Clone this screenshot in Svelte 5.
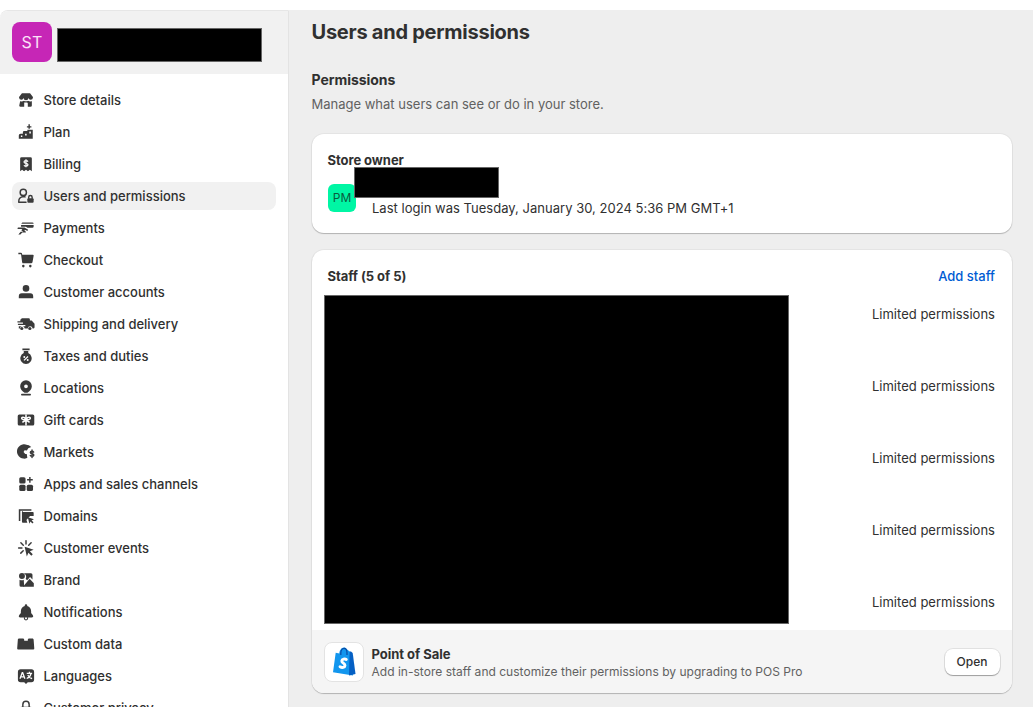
<script>
  const nav = [
    { label: "Store details", icon: "store" },
    { label: "Plan", icon: "plan" },
    { label: "Billing", icon: "billing" },
    { label: "Users and permissions", icon: "users", active: true },
    { label: "Payments", icon: "payments" },
    { label: "Checkout", icon: "cart" },
    { label: "Customer accounts", icon: "person" },
    { label: "Shipping and delivery", icon: "truck" },
    { label: "Taxes and duties", icon: "taxes" },
    { label: "Locations", icon: "pin" },
    { label: "Gift cards", icon: "gift" },
    { label: "Markets", icon: "globe" },
    { label: "Apps and sales channels", icon: "apps" },
    { label: "Domains", icon: "domains" },
    { label: "Customer events", icon: "events" },
    { label: "Brand", icon: "brand" },
    { label: "Notifications", icon: "bell" },
    { label: "Custom data", icon: "data" },
    { label: "Languages", icon: "lang" },
    { label: "Customer privacy", icon: "lock" },
  ];

  const staff = [1, 2, 3, 4, 5];
</script>

{#snippet icon(name)}
  <svg class="ico" viewBox="0 0 20 20" aria-hidden="true">
    {#if name === "store"}
      <path d="M5.500 2.500h9l3.200 4.300v.7a2.600 2.600 0 0 1-5.100.3 2.600 2.600 0 0 1-5.200 0 2.600 2.600 0 0 1-5.100-.3v-.7z" />
      <path fill-rule="evenodd" d="M3.500 11.400c1.500.4 3.200.1 4.300-.7 1.300.9 3.100.9 4.400 0 1.100.8 2.800 1.100 4.300.7v4.600a1.500 1.500 0 0 1-1.500 1.500h-11a1.500 1.500 0 0 1-1.500-1.500zM8 12.800v4.700h4v-3.700a1 1 0 0 0-1-1z" />
    {:else if name === "plan"}
      <path d="M12.700 1.500h1.600v2h1.700v1.400h-1.700v1.600h-1.600v-1.600h-1.700v-1.400h1.700z" />
      <path fill-rule="evenodd" d="M11.500 7.500h6v10h-15.500v-3.500a2 2 0 0 1 2-2h2.500v-1.500a1.500 1.500 0 0 1 1.500-1.500h3.500zM13.700 9.500v2.300h1.700v-2.300zM9 12v2h1.700v-2zM4.300 14v1.600h1.600v-1.600z" />
    {:else if name === "billing"}
      <path d="M5 2.500h10a1.500 1.500 0 0 1 1.500 1.500v14l-2.200-1.600-2.100 1.600-2.200-1.600-2.200 1.600-2.100-1.600-2.200 1.600v-14a1.500 1.500 0 0 1 1.500-1.500z" />
      <path class="cut" d="M12.200 7.300c-.4-.7-1.200-1-2.200-1-1.200 0-2.200.5-2.200 1.500 0 2.100 4.400 1 4.400 3.100 0 1-1 1.500-2.200 1.500-1 0-1.900-.4-2.200-1.100M10 4.700v9" />
    {:else if name === "users"}
      <path class="line" d="M10.500 6a3.500 3.500 0 1 1-7 0 3.500 3.500 0 0 1 7 0zM2 16.500v-1a4.500 4.500 0 0 1 4.500-4.500h2.500" />
      <path class="line" d="M2 17h8" />
      <path class="line" d="M13 12.500v-1.200a1.900 1.900 0 0 1 3.800 0v1.200" />
      <rect x="11.500" y="12.500" width="7" height="5" rx="1.200" />
    {:else if name === "payments"}
      <path d="M6 3.800h11a1.500 1.500 0 0 1 1.500 1.500h-13.500a1.500 1.500 0 0 1 1-1.500zM4.500 6.800h14v1.500a1.500 1.500 0 0 1-1.500 1.500h-5.500l-1.500-1.300h-5.500z" />
      <path d="M1 9.500h7.300l3.700 2.200c.8.600 0 1.700-.9 1.300l-2.300-1.100-.6.700 1.600 1.500c.4.500-.1 1.200-.7 1h-3.300l-2 2h-2.300l2.600-2.800h2.700l-2-1.700 1.200-1.500h-5.500z" />
    {:else if name === "cart"}
      <path d="M1.500 2h2.700a1.500 1.500 0 0 1 1.500 1.300l.1 .9h11.700a1 1 0 0 1 1 1.200l-1.300 7.100a1.500 1.500 0 0 1-1.500 1.200h-8.500a1.500 1.500 0 0 1-1.500-1.300l-1.200-8.900h-3z" />
      <circle cx="7" cy="16.800" r="1.400" /><circle cx="14.800" cy="16.800" r="1.400" />
    {:else if name === "person"}
      <circle cx="10" cy="6" r="3.700" />
      <path d="M5.800 11.400h8.400a3.500 3.500 0 0 1 3.800 3.500v2.100h-16v-2.100a3.500 3.500 0 0 1 3.800-3.500z" />
    {:else if name === "truck"}
      <path fill-rule="evenodd" d="M5 3.500h8a1.300 1.300 0 0 1 1.300 1.300v1.200h2l3.200 3.700v4a1.200 1.200 0 0 1-1.200 1.200h-.9a2.800 2.800 0 0 0-5.500 0h-3.300a2.800 2.800 0 0 0-5.500 0h-1.100v-2.400h7.300v-1.300h-8.300v-1.500h5.600v-1.300h-6.100v-1.500h3.200v-1.200a1.300 1.300 0 0 1 1.300-1.300z" />
      <circle cx="5.300" cy="15" r="1.800" /><circle cx="14.300" cy="15" r="1.800" />
    {:else if name === "taxes"}
      <path d="M6 1.800h8v1.700h-8zM7.500 4.500h5v2.300a6.300 6.300 0 1 1-5 0z" />
      <path class="cut" d="M7.800 14.900l4.400-4.400" />
      <circle class="dot" cx="8.100" cy="11" r="1.100" /><circle class="dot" cx="11.900" cy="14.400" r="1.100" />
    {:else if name === "pin"}
      <path fill-rule="evenodd" d="M10 1.500a6.500 6.500 0 0 1 6.500 6.500c0 2.900-2.300 5.500-4.900 7.200h-3.200c-2.600-1.700-4.900-4.300-4.900-7.200a6.500 6.500 0 0 1 6.500-6.500zM10 6a2.100 2.100 0 1 0 0 4.200 2.100 2.100 0 0 0 0-4.200z" />
      <rect x="4.500" y="16.500" width="11" height="1.700" rx=".8" />
    {:else if name === "gift"}
      <path d="M2.500 3.800h15a1.700 1.700 0 0 1 1.700 1.700v9a1.700 1.700 0 0 1-1.700 1.700h-15a1.700 1.700 0 0 1-1.700-1.700v-9a1.700 1.700 0 0 1 1.700-1.700z" />
      <path class="cut wide" d="M10 9.800c-.8-2-2.800-3.500-4.200-2.600-1.300.9-.6 2.900 4.200 2.600zM10 9.800c.8-2 2.800-3.500 4.200-2.600 1.300.9.600 2.900-4.200 2.600zM10 9.800l-4 2.800M10 9.800l4 2.800M10 3.800v12.400" />
    {:else if name === "globe"}
      <path d="M10 2a8 8 0 0 1 5.800 2.500l-3.300 1.400-1.500 2.400-2.600-.3-1.100 2.100 1.900 2 1.600.2.700 4.200-.5.300a8 8 0 1 1 0-14.800z" />
      <path class="line" d="M18.500 10.200c-.4-.7-1-1-1.800-1-1 0-1.900.5-1.900 1.400 0 1.900 3.900 .9 3.900 2.800 0 .9-.9 1.400-1.900 1.400-.9 0-1.700-.4-2-1M16.700 7.800v8.400" />
    {:else if name === "apps"}
      <rect x="2.500" y="2.500" width="7" height="7" rx="1.700" />
      <rect x="2.500" y="10.800" width="7" height="7" rx="1.700" />
      <rect x="10.800" y="10.800" width="7" height="7" rx="1.700" />
      <path d="M13.500 2.200h1.600v2.300h2.400v1.600h-2.400v2.400h-1.600v-2.400h-2.300v-1.600h2.300z" />
    {:else if name === "domains"}
      <path d="M2 2.500h14v1.700h-12.300v11.300h-1.700z" />
      <path fill-rule="evenodd" d="M6.500 5.500h11a1 1 0 0 1 1 1v3.500h-4l-4 4.500 1 3h-5a1 1 0 0 1-1-1v-11a1 1 0 0 1 1-1z" />
      <path d="M12 11.500l6.800 2.200-2.600 1.200 2.200 2.100-1.300 1.300-2.100-2.200-1.200 2.600z" />
    {:else if name === "events"}
      <path d="M8.500 8.500l10 3.400-4.200 1.800 3.200 3.200-1.600 1.600-3.200-3.200-1.800 4.200z" />
      <path class="line" d="M10 1.800v3.700M4.300 4.200l2.700 2.700M15.700 4.200l-2.700 2.700M1.800 10h3.700M4.200 15.700l2.700-2.700" />
    {:else if name === "brand"}
      <path d="M7.500 2.500h8a1.700 1.700 0 0 1 1.700 1.700v5.300l-2.700-2.700-3.200 3.400-1.600-1.400a5 5 0 0 0-2.200-6.300zM2.800 9.600a4.800 4.800 0 0 0 4.700.2l.5 7.700h-3.500a1.700 1.700 0 0 1-1.700-1.700z" />
      <circle cx="5.500" cy="5.500" r="3.300" />
      <path d="M14 8.500l4.700 5v4h-12z" />
    {:else if name === "bell"}
      <path d="M10 1.500a1.400 1.400 0 0 1 1.400 1.400v.4c2.800.6 4.300 3.100 4.300 5.800v1.800c0 1.300 2.300 2.100 2.300 3.900 0 .7-.6 1.300-1.300 1.300h-13.400c-.7 0-1.300-.6-1.300-1.300 0-1.800 2.300-2.600 2.300-3.900v-1.800c0-2.700 1.500-5.200 4.300-5.800v-.4a1.400 1.400 0 0 1 1.400-1.400z" />
      <path class="line thin" d="M8.200 16.200v.8a1.800 1.800 0 0 0 3.600 0v-.8" />
    {:else if name === "data"}
      <path d="M3 4h3.500c.9 0 1.500.7 1.500 1.500v1h4v-1c0-.8.600-1.500 1.500-1.500h3.500c.9 0 1.500.7 1.500 1.500l.7 9.500c0 .6-.4 1-1 1h-17c-.6 0-1-.4-1-1l.7-9.500c0-.8.600-1.500 1.500-1.500z" />
    {:else if name === "lang"}
      <path d="M4 2.500h12a3 3 0 0 1 3 3v8.500a3 3 0 0 1-3 3h-4l-2 2-2-2h-4a3 3 0 0 1-3-3v-8.500a3 3 0 0 1 3-3z" />
      <path class="cut" d="M3.300 13l2.500-6.700h.5l2.500 6.700M4.300 10.900h3.600M10.800 7h6M13.800 5.300v1.700M15.700 7c-.5 2.600-2.500 4.800-4.900 5.800M12 8.800c.8 1.900 2.700 3.400 4.800 4" />
    {:else if name === "lock"}
      <path class="line" d="M6.500 9v-3a3.500 3.500 0 0 1 7 0v3" />
      <rect x="3.500" y="8.500" width="13" height="9" rx="1.500" />
    {/if}
  </svg>
{/snippet}

<div class="page">
  <aside class="sidebar">
    <div class="store-head">
      <div class="store-avatar">ST</div>
      <div class="redact head-redact"></div>
    </div>
    <nav>
      {#each nav as item}
        <a href="#top" class="item" class:active={item.active}>
          {@render icon(item.icon)}
          <span>{item.label}</span>
        </a>
      {/each}
    </nav>
  </aside>

  <main>
    <h1>Users and permissions</h1>

    <section class="intro">
      <h2>Permissions</h2>
      <p>Manage what users can see or do in your store.</p>
    </section>

    <section class="card owner">
      <h3>Store owner</h3>
      <div class="owner-row">
        <div class="owner-avatar">PM</div>
        <div class="owner-text">Last login was Tuesday, January 30, 2024 5:36 PM GMT+1</div>
      </div>
      <div class="redact owner-redact"></div>
    </section>

    <section class="card staff">
      <div class="staff-head">
        <h3>Staff (5 of 5)</h3>
        <a href="#top">Add staff</a>
      </div>
      <div class="staff-list">
        {#each staff as n (n)}
          <div class="staff-row">Limited permissions</div>
        {/each}
        <div class="redact staff-redact"></div>
      </div>
      <div class="pos">
        <div class="pos-logo">
          <svg viewBox="0 0 28 32" width="28" height="32" aria-hidden="true">
            <path fill="#1296ee" d="M9.300 7.500c.2-3 2-6 4.700-6 1.100 0 1.800.5 2.300 1.300l3.300 2.700 1.400 1.200 2 22.800-20 -3.200 2.700-19.500z" />
            <path fill="#0560c4" d="M19.600 5.500l1.400 0 1.700 1.400 2.800 21-6.500 1.600z" />
            <path fill="none" stroke="#0a4fa8" stroke-width="1.300" d="M10.800 9v-2c0-2.500 1.300-4.600 3.200-4.600s3 2 3 4.600v2" />
            <path fill="none" stroke="#fff" stroke-width="2.900" stroke-linecap="round" d="M16.300 13.500c-1.300-.9-4.300-.6-4.500 1.300-.2 2.300 3.400 2.300 3.200 4.800-.2 2-3 2.400-5 1.200" />
          </svg>
        </div>
        <div class="pos-text">
          <strong>Point of Sale</strong>
          <span>Add in-store staff and customize their permissions by upgrading to POS Pro</span>
        </div>
        <button>Open</button>
      </div>
    </section>
  </main>
</div>

<style>
  :global(body) {
    margin: 0;
    background: #fff;
    overflow: hidden;
    font-family: Inter, "Liberation Sans", sans-serif;
    color: #303030;
  }

  .page {
    display: flex;
    height: 707px;
    padding-top: 10px;
    box-sizing: border-box;
    overflow: hidden;
  }

  .sidebar {
    width: 289px;
    flex: none;
    background: #fff;
    border-top: 1px solid #e6e6e6;
    border-right: 1px solid #e3e3e3;
    border-top-left-radius: 8px;
    box-sizing: border-box;
    overflow: hidden;
  }

  .store-head {
    height: 63px;
    background: #f1f1f1;
    display: flex;
    padding: 11px 12px 0;
    box-sizing: border-box;
    gap: 5px;
  }

  .store-avatar {
    width: 40px;
    height: 40px;
    border-radius: 8px;
    background: #c626b6;
    color: #fbe3f8;
    font-size: 16px;
    display: flex;
    align-items: center;
    justify-content: center;
    letter-spacing: 0.3px;
  }

  .redact {
    background: #000;
    box-shadow: 0 0 0 1px #666 inset;
  }

  .head-redact {
    width: 205px;
    height: 34px;
    margin-top: 6px;
  }

  nav {
    padding-top: 10px;
    display: flex;
    flex-direction: column;
  }

  .item {
    height: 28px;
    margin: 2px 12px;
    width: 264px;
    box-sizing: border-box;
    padding-left: 4px;
    border-radius: 8px;
    display: flex;
    align-items: center;
    gap: 7.5px;
    font-size: 13px;
    font-weight: 450;
    line-height: 20px;
    color: #303030;
    text-decoration: none;
  }

  .item.active {
    background: #f1f1f1;
  }

  .ico {
    width: 20px;
    height: 20px;
    flex: none;
    fill: #3a3a3a;
    transform: scale(0.9);
  }

  .ico .cut {
    fill: none;
    stroke: #fff;
    stroke-width: 1.400;
  }

  .ico .wide {
    stroke-width: 1.700;
  }

  .ico .dot {
    fill: #fff;
  }

  .ico .line {
    fill: none;
    stroke: #3a3a3a;
    stroke-width: 1.600;
    stroke-linecap: round;
  }

  .ico .thin {
    stroke-width: 1.200;
  }

  main {
    flex: 1;
    background: #eee;
    padding: 0 21px 0 23px;
    min-width: 0;
  }

  h1 {
    margin: 8px 0 0 -0.5px;
    font-size: 20px;
    line-height: 28px;
    font-weight: 650;
    letter-spacing: -0.25px;
  }

  .intro {
    margin-top: 24px;
    margin-left: -0.5px;
  }

  h2 {
    margin: 0;
    font-size: 14px;
    line-height: 20px;
    font-weight: 650;
    letter-spacing: -0.05px;
  }

  .intro p {
    margin: 4px 0 0;
    font-size: 13px;
    line-height: 20px;
    color: #616161;
  }

  .card {
    background: #fff;
    border-radius: 12px;
    box-shadow: 0 1px 1px rgba(0, 0, 0, 0.22), 0 0 0 1px rgba(0, 0, 0, 0.04);
    position: relative;
    overflow: hidden;
  }

  h3 {
    margin: 0 0 0 -0.5px;
    font-size: 13px;
    line-height: 20px;
    font-weight: 650;
    letter-spacing: -0.05px;
  }

  .owner {
    margin-top: 20px;
    height: 99px;
    padding: 16px 16px 0;
    box-sizing: border-box;
  }

  .owner-row {
    display: flex;
    align-items: flex-end;
    gap: 16px;
    margin-top: 14px;
    font-size: 13px;
    line-height: 20px;
  }

  .owner-avatar {
    width: 28px;
    height: 28px;
    border-radius: 6px;
    background: #00f6a4;
    color: #0a5c40;
    font-size: 12px;
    display: flex;
    align-items: center;
    justify-content: center;
  }

  .owner-text {
    margin-bottom: -6px;
    letter-spacing: 0.02px;
  }

  .owner-redact {
    position: absolute;
    left: 42px;
    top: 33px;
    width: 145px;
    height: 31px;
  }

  .staff {
    margin-top: 17px;
    height: 443px;
  }

  .staff-head {
    display: flex;
    justify-content: space-between;
    align-items: flex-start;
    padding: 16px 17px 0 16px;
    height: 45px;
    box-sizing: border-box;
    font-size: 13px;
    line-height: 20px;
  }

  .staff-head a {
    color: #005bd3;
    text-decoration: none;
    font-weight: 450;
  }

  .staff-list {
    position: relative;
    padding: 9px 17px 18px 16px;
    display: flex;
    flex-direction: column;
    gap: 52px;
    align-items: flex-end;
  }

  .staff-row {
    font-size: 13px;
    line-height: 20px;
    letter-spacing: 0.02px;
  }

  .staff-redact {
    position: absolute;
    left: 12px;
    top: 0;
    width: 465px;
    height: 329px;
  }

  .pos {
    height: 63px;
    background: #f5f5f5;
    display: flex;
    align-items: center;
    padding: 0 12px;
    gap: 7.5px;
  }

  .pos-logo {
    width: 38px;
    height: 38px;
    border: 1px solid #e3e3e3;
    border-radius: 8px;
    background: #fff;
    display: flex;
    align-items: center;
    justify-content: center;
  }

  .pos-text {
    flex: 1;
    display: flex;
    flex-direction: column;
    font-size: 13px;
    line-height: 18px;
    padding-top: 3px;
  }

  .pos-text strong {
    font-weight: 650;
    letter-spacing: -0.03px;
  }

  .pos-text span {
    font-size: 12px;
    color: #616161;
    letter-spacing: 0.02px;
  }

  button {
    width: 55px;
    height: 26px;
    margin-right: 0.5px;
    border: none;
    border-radius: 8px;
    background: #fff;
    box-shadow: 0 1px 1px rgba(0, 0, 0, 0.3), 0 0 0 1px rgba(0, 0, 0, 0.08);
    font: 500 12px Inter, "Liberation Sans", sans-serif;
    color: #303030;
  }
</style>
